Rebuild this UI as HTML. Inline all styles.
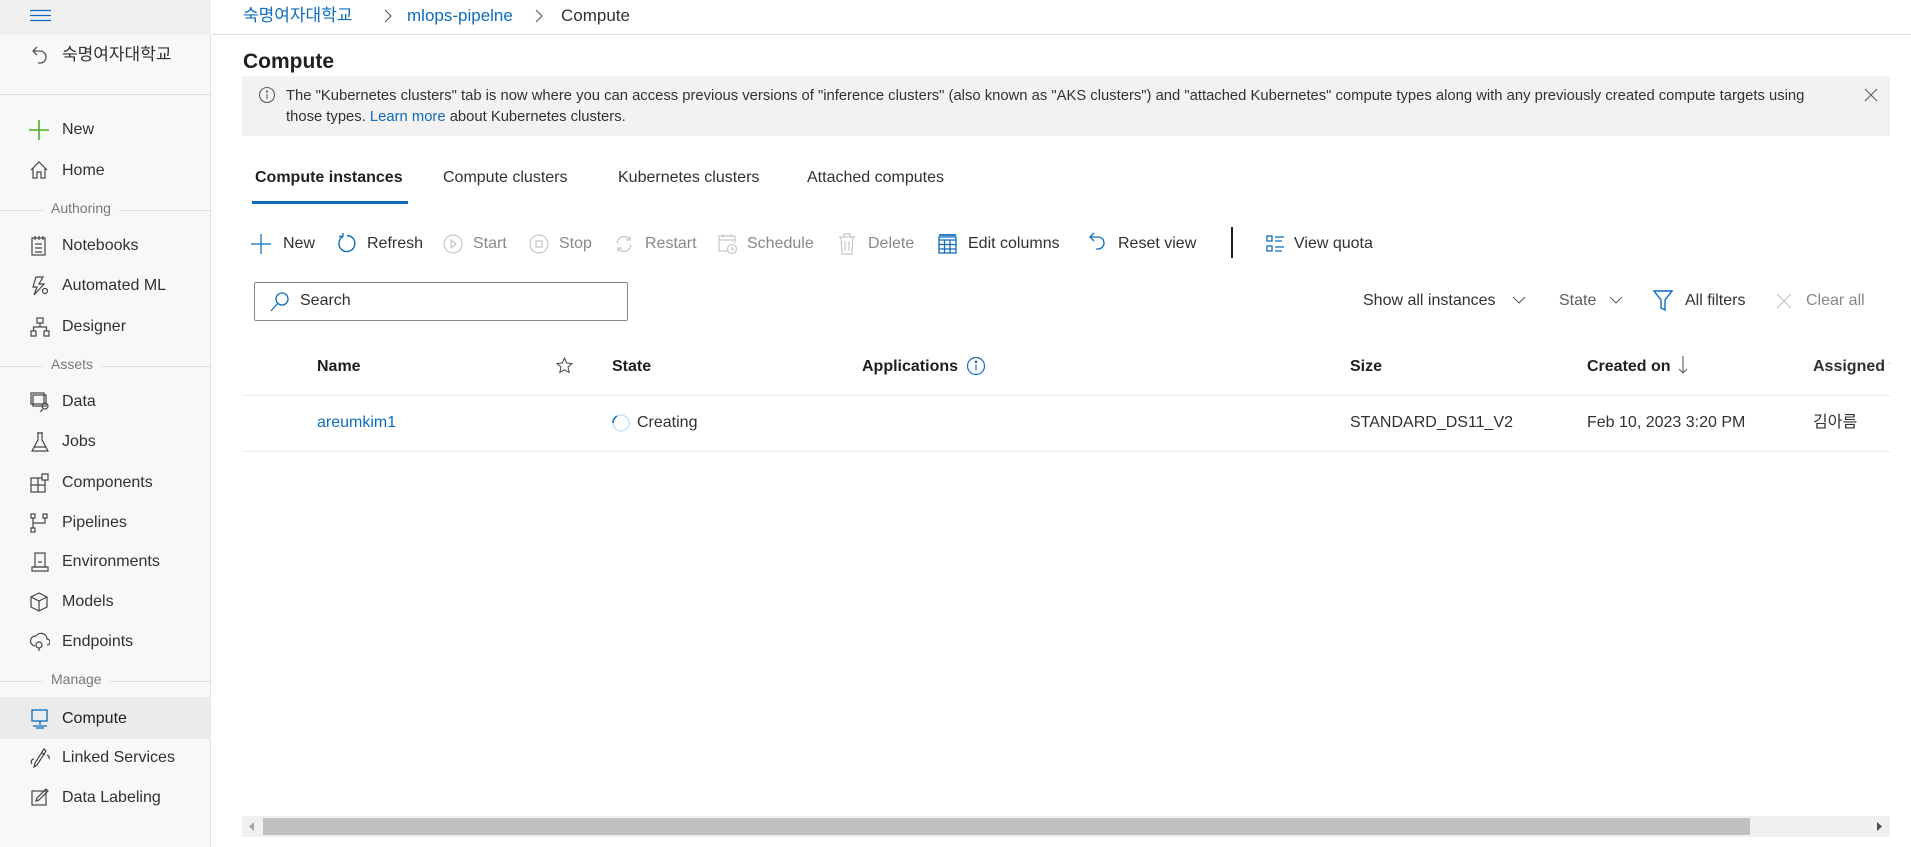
<!DOCTYPE html>
<html><head><meta charset="utf-8"><style>
*{margin:0;padding:0;box-sizing:border-box}
body{width:1911px;height:847px;overflow:hidden;background:#fff;font-family:"Liberation Sans","Noto Sans CJK KR",sans-serif;color:#323130;position:relative;font-size:16px}
.a{position:absolute;white-space:nowrap;line-height:20px}
.ic{position:absolute}
.side{position:absolute;left:0;top:0;width:211px;height:847px;background:#f8f8f8;border-right:1px solid #e1dfdd}
.sec{position:absolute;left:0;width:211px;height:20px;color:#797775;font-size:14px}
.sec:before{content:"";position:absolute;left:0;top:10px;width:211px;border-top:1px solid #e1dfdd}
.sec span{position:relative;background:#f8f8f8;padding:0 8px;margin-left:43px}
.blue{color:#0f6cbd}
.dis{color:#8a8886}
.bold{font-weight:bold}
</style></head><body>
<div class="side">
  <div style="position:absolute;left:0;top:0;width:211px;height:35px;background:#f0f0f0"></div>
  <svg class="ic" style="left:30px;top:8px" width="21" height="16"><path d="M0 2.5H21M0 7.5H21M0 12.5H21" stroke="#0f6cbd" stroke-width="1.3"/></svg>
  <svg class="ic" style="left:31px;top:46px" width="18" height="18" fill="none" stroke="#555" stroke-width="1.3"><path d="M6 1L2 5l4 4M2 5h7a6 6 0 0 1 0 12H7"/></svg>
  <div class="a" style="left:62px;top:45px;font-size:17px">숙명여자대학교</div>
  <div style="position:absolute;left:0;top:94px;width:211px;border-top:1px solid #e1dfdd"></div>

  <svg class="ic" style="left:29px;top:120px" width="20" height="20"><path d="M10 0V20M0 10H20" stroke="#4caf26" stroke-width="1.6"/></svg>
  <div class="a" style="left:62px;top:120px">New</div>
  <svg class="ic" style="left:30px;top:161px" width="18" height="18" fill="none" stroke="#444" stroke-width="1.2"><path d="M1 9L9 1l8 8M3 7v10h4v-6h4v6h4V7"/></svg>
  <div class="a" style="left:62px;top:161px">Home</div>
  <div class="sec" style="top:200px"><span>Authoring</span></div>
  <svg class="ic" style="left:31px;top:236px" width="16" height="20" fill="none" stroke="#444" stroke-width="1.2"><rect x="1" y="2" width="13" height="17"/><path d="M4 0v4M8 0v4M12 0v4M4 8h7M4 12h7M4 16h7"/></svg>
  <div class="a" style="left:62px;top:236px">Notebooks</div>
  <svg class="ic" style="left:31px;top:276px" width="18" height="20" fill="none" stroke="#444" stroke-width="1.2"><path d="M5 1h7L8 8h5L3 19l3-8H2z"/><circle cx="14" cy="15" r="2.5"/></svg>
  <div class="a" style="left:62px;top:276px">Automated ML</div>
  <svg class="ic" style="left:30px;top:317px" width="20" height="20" fill="none" stroke="#444" stroke-width="1.2"><rect x="7" y="1" width="6" height="5"/><rect x="1" y="14" width="5" height="5"/><rect x="14" y="14" width="5" height="5"/><path d="M10 6v4M3.5 14v-4h13v4"/></svg>
  <div class="a" style="left:62px;top:317px">Designer</div>
  <div class="sec" style="top:356px"><span>Assets</span></div>
  <svg class="ic" style="left:30px;top:392px" width="20" height="20" fill="none" stroke="#444" stroke-width="1.2"><rect x="1" y="1" width="13" height="11"/><rect x="3" y="3" width="13" height="11"/><circle cx="15" cy="14" r="3"/><path d="M13 17l-3 3"/></svg>
  <div class="a" style="left:62px;top:392px">Data</div>
  <svg class="ic" style="left:31px;top:432px" width="18" height="20" fill="none" stroke="#444" stroke-width="1.2"><path d="M6 1h6M7 1v7L1 19h16L11 8V1M3 15h12"/></svg>
  <div class="a" style="left:62px;top:432px">Jobs</div>
  <svg class="ic" style="left:30px;top:473px" width="20" height="20" fill="none" stroke="#444" stroke-width="1.2"><rect x="1" y="5" width="14" height="14"/><path d="M8 5v14M1 12h14"/><rect x="12" y="1" width="6" height="6" fill="#f8f8f8"/></svg>
  <div class="a" style="left:62px;top:473px">Components</div>
  <svg class="ic" style="left:30px;top:513px" width="20" height="20" fill="none" stroke="#444" stroke-width="1.2"><rect x="1" y="1" width="4" height="4"/><rect x="13" y="1" width="4" height="4"/><rect x="1" y="15" width="4" height="4"/><path d="M3 5v10M3 10h12V5"/></svg>
  <div class="a" style="left:62px;top:513px">Pipelines</div>
  <svg class="ic" style="left:31px;top:552px" width="18" height="20" fill="none" stroke="#444" stroke-width="1.2"><rect x="4" y="1" width="10" height="14"/><path d="M1 19h16v-4H1zM7 10h4"/></svg>
  <div class="a" style="left:62px;top:552px">Environments</div>
  <svg class="ic" style="left:30px;top:592px" width="18" height="20" fill="none" stroke="#444" stroke-width="1.2"><path d="M9 1l8 4v10l-8 4-8-4V5zM1 5l8 4 8-4M9 9v10"/></svg>
  <div class="a" style="left:62px;top:592px">Models</div>
  <svg class="ic" style="left:30px;top:632px" width="20" height="20" fill="none" stroke="#444" stroke-width="1.2"><path d="M5 14a5 5 0 0 1 1-10 6 6 0 0 1 11 3 3 3 0 0 1 0 6"/><circle cx="9" cy="13" r="3"/><path d="M9 16v3"/></svg>
  <div class="a" style="left:62px;top:632px">Endpoints</div>
  <div class="sec" style="top:671px"><span>Manage</span></div>
  <div style="position:absolute;left:0;top:697px;width:211px;height:42px;background:#ebebeb"></div>
  <svg class="ic" style="left:30px;top:709px" width="20" height="20" fill="none" stroke="#0f6cbd" stroke-width="1.3"><rect x="2" y="1" width="15" height="11"/><path d="M10 12v4M3 17h14M6 19h8"/></svg>
  <div class="a" style="left:62px;top:709px;color:#201f1e">Compute</div>
  <svg class="ic" style="left:30px;top:748px" width="20" height="20" fill="none" stroke="#444" stroke-width="1.2"><path d="M14 1l-9 14-1 4 3-2 9-14zM12 5l3 2M4 11a3 3 0 0 0-2 5M17 7a3 3 0 0 1 2 4"/></svg>
  <div class="a" style="left:62px;top:748px">Linked Services</div>
  <svg class="ic" style="left:31px;top:788px" width="18" height="18" fill="none" stroke="#444" stroke-width="1.2"><rect x="1" y="3" width="14" height="14"/><path d="M5 13l1-3 9-9 2 2-9 9z"/></svg>
  <div class="a" style="left:62px;top:788px">Data Labeling</div>
</div>

<div style="position:absolute;left:212px;top:34px;width:1699px;border-top:1px solid #e1dfdd"></div>
<div class="a blue" style="left:243px;top:6px;font-size:17px">숙명여자대학교</div>
<svg class="ic" style="left:384px;top:9px" width="8" height="14"><path d="M1 1l6 6-6 6" fill="none" stroke="#555" stroke-width="1.1"/></svg>
<div class="a blue" style="left:407px;top:6px;font-size:17px">mlops-pipelne</div>
<svg class="ic" style="left:535px;top:9px" width="8" height="14"><path d="M1 1l6 6-6 6" fill="none" stroke="#555" stroke-width="1.1"/></svg>
<div class="a" style="left:561px;top:6px;font-size:17px">Compute</div>

<div class="a bold" style="left:243px;top:49px;font-size:21px;line-height:26px;color:#201f1e">Compute</div>

<div style="position:absolute;left:242px;top:76px;width:1648px;height:60px;background:#f3f2f1"></div>
<svg class="ic" style="left:258px;top:86px" width="18" height="18" fill="none" stroke="#605e5c" stroke-width="1.1"><circle cx="9" cy="9" r="7.5"/><path d="M9 8v5"/><circle cx="9" cy="5.5" r=".6" fill="#605e5c"/></svg>
<div class="a" style="left:286px;top:86px;font-size:14.8px">The "Kubernetes clusters" tab is now where you can access previous versions of "inference clusters" (also known as "AKS clusters") and "attached Kubernetes" compute types along with any previously created compute targets using</div>
<div class="a" style="left:286px;top:107px;font-size:14.8px">those types. <span class="blue">Learn more</span> about Kubernetes clusters.</div>
<svg class="ic" style="left:1864px;top:88px" width="14" height="14"><path d="M1 1l12 12M13 1L1 13" stroke="#605e5c" stroke-width="1.1"/></svg>

<div class="a bold" style="left:255px;top:168px;font-size:16px;color:#201f1e">Compute instances</div>
<div class="a" style="left:443px;top:168px">Compute clusters</div>
<div class="a" style="left:618px;top:168px">Kubernetes clusters</div>
<div class="a" style="left:807px;top:168px">Attached computes</div>
<div style="position:absolute;left:252px;top:201px;width:156px;height:3px;background:#0f6cbd"></div>

<svg class="ic" style="left:251px;top:234px" width="20" height="20"><path d="M10 0V20M0 10H20" stroke="#0f6cbd" stroke-width="1.2"/></svg>
<div class="a" style="left:283px;top:234px">New</div>
<svg class="ic" style="left:336px;top:233px" width="22" height="22" fill="none" stroke="#0f6cbd" stroke-width="1.4"><path d="M7 3.5A8 8 0 1 0 11 2.5M7 3.5V0M7 3.5H3"/></svg>
<div class="a" style="left:367px;top:234px">Refresh</div>
<svg class="ic" style="left:443px;top:234px" width="20" height="20" fill="none" stroke="#c8c6c4" stroke-width="1.2"><circle cx="10" cy="10" r="9"/><path d="M8 6l5 4-5 4z"/></svg>
<div class="a dis" style="left:473px;top:234px">Start</div>
<svg class="ic" style="left:529px;top:234px" width="20" height="20" fill="none" stroke="#c8c6c4" stroke-width="1.2"><circle cx="10" cy="10" r="9"/><rect x="7" y="7" width="6" height="6"/></svg>
<div class="a dis" style="left:559px;top:234px">Stop</div>
<svg class="ic" style="left:614px;top:234px" width="20" height="20" fill="none" stroke="#c8c6c4" stroke-width="1.3"><path d="M3 9a7 7 0 0 1 13-3M17 11a7 7 0 0 1-13 3M16 2v4h-4M4 18v-4h4"/></svg>
<div class="a dis" style="left:645px;top:234px">Restart</div>
<svg class="ic" style="left:718px;top:233px" width="20" height="22" fill="none" stroke="#c8c6c4" stroke-width="1.2"><path d="M9 18H1V3h16v7M1 7h16M5 1v3M13 1v3"/><circle cx="14" cy="16" r="4.5"/><path d="M14 13.5v3h2"/></svg>
<div class="a dis" style="left:747px;top:234px">Schedule</div>
<svg class="ic" style="left:838px;top:233px" width="18" height="22" fill="none" stroke="#c8c6c4" stroke-width="1.2"><path d="M1 4h16M6 4V1h6v3M3 4l1 17h10l1-17M7 8v10M11 8v10"/></svg>
<div class="a dis" style="left:868px;top:234px">Delete</div>
<svg class="ic" style="left:938px;top:234px" width="20" height="20" fill="none" stroke="#0f6cbd" stroke-width="1.3"><rect x="1" y="3" width="17" height="16"/><path d="M1 6h17M1 10.5h17M1 15h17M6.5 6v13M12 6v13"/><path d="M1 1h17" stroke-width="1.8"/></svg>
<div class="a" style="left:968px;top:234px">Edit columns</div>
<svg class="ic" style="left:1088px;top:232px" width="20" height="22" fill="none" stroke="#0f6cbd" stroke-width="1.3"><path d="M6 1L2 5l4 4M2 5h8a6 6 0 0 1 0 12H8"/></svg>
<div class="a" style="left:1118px;top:234px">Reset view</div>
<div style="position:absolute;left:1231px;top:227px;width:2px;height:31px;background:#201f1e"></div>
<svg class="ic" style="left:1266px;top:234px" width="20" height="20" fill="none" stroke="#0f6cbd" stroke-width="1.3"><rect x="1" y="2" width="5" height="5"/><rect x="1" y="12" width="5" height="5"/><path d="M9 3h9M9 7h7M9 13h9M9 17h7"/></svg>
<div class="a" style="left:1294px;top:234px">View quota</div>

<div style="position:absolute;left:254px;top:282px;width:374px;height:39px;border:1px solid #8a8886;border-radius:2px"></div>
<svg class="ic" style="left:270px;top:291px" width="20" height="22" fill="none" stroke="#0f6cbd" stroke-width="1.3"><circle cx="12" cy="8" r="6"/><path d="M8 12L1 20"/></svg>
<div class="a" style="left:300px;top:291px">Search</div>

<div class="a" style="left:1363px;top:291px">Show all instances</div>
<svg class="ic" style="left:1512px;top:296px" width="14" height="9"><path d="M1 1l6 6 6-6" fill="none" stroke="#605e5c" stroke-width="1.1"/></svg>
<div class="a" style="left:1559px;top:291px;color:#605e5c">State</div>
<svg class="ic" style="left:1609px;top:296px" width="14" height="9"><path d="M1 1l6 6 6-6" fill="none" stroke="#605e5c" stroke-width="1.1"/></svg>
<svg class="ic" style="left:1653px;top:290px" width="20" height="22" fill="none" stroke="#0f6cbd" stroke-width="1.4"><path d="M1 1h18l-7 9v10l-4-2v-8z"/></svg>
<div class="a" style="left:1685px;top:291px">All filters</div>
<svg class="ic" style="left:1776px;top:293px" width="16" height="16"><path d="M1 1l14 14M15 1L1 15" stroke="#c8c6c4" stroke-width="1.2"/></svg>
<div class="a dis" style="left:1806px;top:291px">Clear all</div>

<div class="a bold" style="left:317px;top:357px;font-size:16px;color:#201f1e">Name</div>
<svg class="ic" style="left:556px;top:357px" width="17" height="17" fill="none" stroke="#444" stroke-width="1"><path d="M8.5 1l2.2 5 5.3.5-4 3.6 1.2 5.4-4.7-2.8-4.7 2.8 1.2-5.4-4-3.6 5.3-.5z"/></svg>
<div class="a bold" style="left:612px;top:357px;color:#201f1e">State</div>
<div class="a bold" style="left:862px;top:357px;color:#201f1e">Applications</div>
<svg class="ic" style="left:966px;top:356px" width="20" height="20" fill="none" stroke="#0f6cbd" stroke-width="1.2"><circle cx="10" cy="10" r="8.5"/><path d="M10 8.5v6"/><circle cx="10" cy="5.8" r=".7" fill="#0f6cbd"/></svg>
<div class="a bold" style="left:1350px;top:357px;color:#201f1e">Size</div>
<div class="a bold" style="left:1587px;top:357px;color:#201f1e">Created on</div>
<svg class="ic" style="left:1678px;top:355px" width="10" height="20"><path d="M5 1v17M1 14l4 4 4-4" fill="none" stroke="#605e5c" stroke-width="1.1"/></svg>
<div style="position:absolute;left:1813px;top:357px;width:77px;overflow:hidden" class="a bold">Assigned to</div>
<div style="position:absolute;left:242px;top:395px;width:1648px;border-top:1px solid #edebe9"></div>

<div class="a blue" style="left:317px;top:413px">areumkim1</div>
<svg class="ic" style="left:611px;top:413px" width="20" height="20" fill="none"><circle cx="10" cy="10" r="8" stroke="#c7e0f4" stroke-width="1.5"/><path d="M2 10A8 8 0 0 1 6 3" stroke="#0f6cbd" stroke-width="1.5"/></svg>
<div class="a" style="left:637px;top:413px">Creating</div>
<div class="a" style="left:1350px;top:413px">STANDARD_DS11_V2</div>
<div class="a" style="left:1587px;top:413px">Feb 10, 2023 3:20 PM</div>
<div class="a" style="left:1813px;top:413px">김아름</div>
<div style="position:absolute;left:242px;top:451px;width:1648px;border-top:1px solid #edebe9"></div>

<div style="position:absolute;left:242px;top:816px;width:1648px;height:21px;background:#f0f0f0"></div>
<div style="position:absolute;left:263px;top:818px;width:1487px;height:17px;background:#c1c1c1"></div>
<svg class="ic" style="left:249px;top:822px" width="6" height="9"><path d="M5 0v9L0 4.5z" fill="#a3a3a3"/></svg>
<svg class="ic" style="left:1877px;top:822px" width="6" height="9"><path d="M0 0v9l5-4.5z" fill="#505050"/></svg>
</body></html>
